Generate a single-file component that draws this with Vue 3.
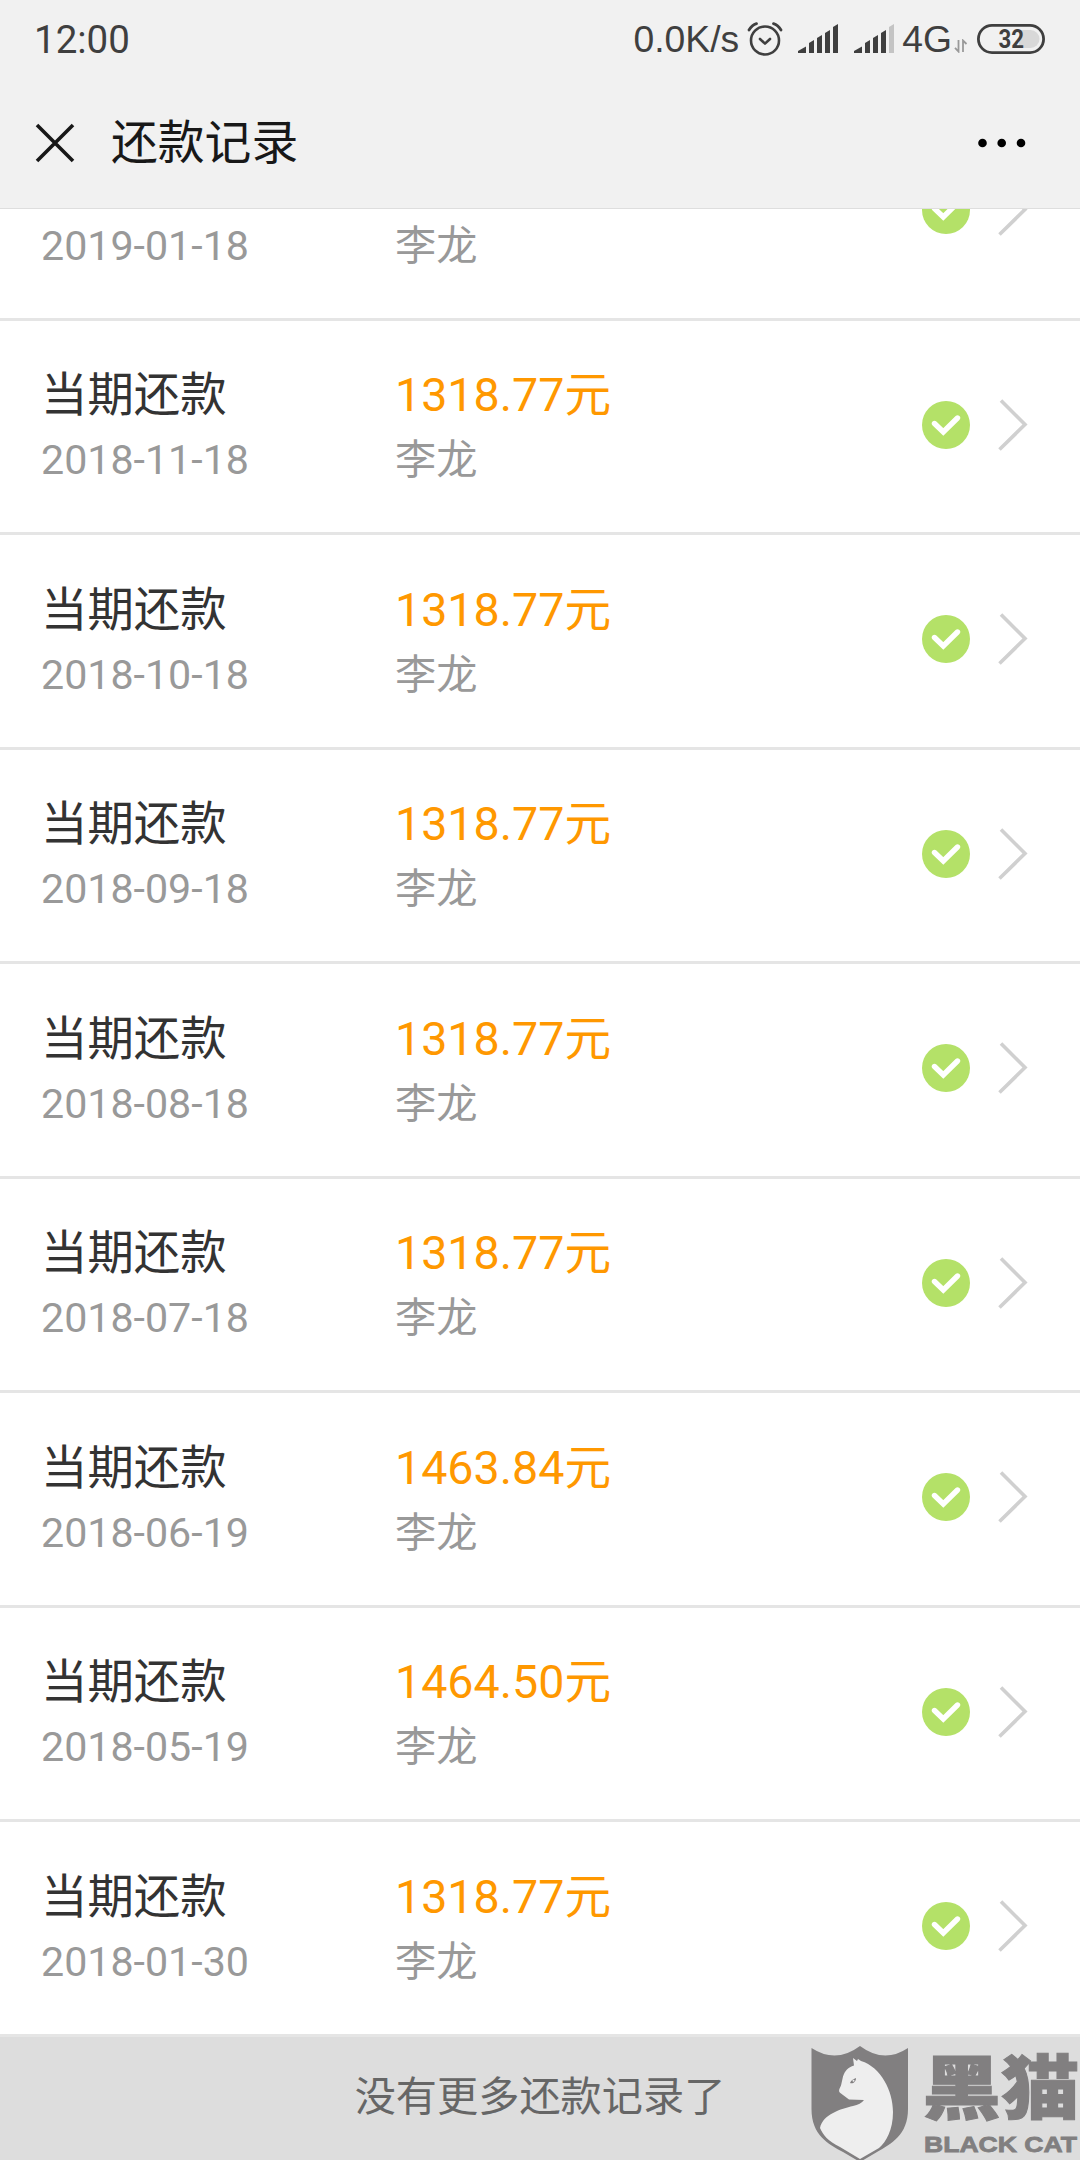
<template>
  <div class="page">
    <header class="header">
      <div class="status-bar">
        <span class="time">12:00</span>
        <div class="status-icons">
          <span class="speed">0.0K/s</span>
          <svg class="alarm" width="36" height="36" viewBox="0 0 36 36">
            <g fill="none" stroke="#3f3f3f" stroke-linecap="round" stroke-linejoin="round">
              <circle cx="18" cy="19.5" r="14" stroke-width="2.6" />
              <path d="M13 18l5 4.6 5-4.6" stroke-width="2.6" />
              <path d="M2 9Q5 4 9.5 2.6M26.5 2.6Q31 4 34 9" stroke-width="2.8" />
            </g>
          </svg>
          <svg
            v-for="(signal, index) in signals"
            :key="index"
            class="signal"
            width="41"
            height="30"
            viewBox="0 0 41 30"
          >
            <path
              v-for="(bar, i) in signalBars"
              :key="i"
              :d="bar"
              :fill="i < signal ? '#3f3f3f' : '#c4c4c4'"
            />
          </svg>
          <span class="network">4G</span>
          <svg class="data" width="14" height="14" viewBox="0 0 14 14">
            <path
              d="M4.5 1v11.5L1 8.8M9 13V1.5L12.5 5"
              fill="none"
              stroke="#999"
              stroke-width="1.8"
            />
          </svg>
          <svg class="battery" width="68" height="30" viewBox="0 0 68 30">
            <path d="M42 6h11.5a9 9 0 0 1 0 18H42z" fill="#d8d8d8" />
            <rect x="1.4" y="1.4" width="65.2" height="27.2" rx="13.6" fill="none" stroke="#3f3f3f" stroke-width="2.8" />
            <text x="21.5" y="23.8" textLength="25.5" lengthAdjust="spacingAndGlyphs">32</text>
          </svg>
        </div>
      </div>
      <nav class="nav-bar">
        <svg class="close" width="40" height="40" viewBox="0 0 40 40">
          <path d="M2 2l36 36M38 2L2 38" stroke="#181818" stroke-width="3.6" />
        </svg>
        <h1 class="title">还款记录</h1>
        <svg class="more" width="48" height="10" viewBox="0 0 48 10">
          <circle cx="4.5" cy="5" r="4.3" />
          <circle cx="23.7" cy="5" r="4.3" />
          <circle cx="43" cy="5" r="4.3" />
        </svg>
      </nav>
    </header>

    <main class="content">
      <ul class="records">
        <li v-for="(record, index) in records" :key="record.date" class="record">
          <div class="info">
            <div class="name"><span v-if="index > 0">当期还款</span></div>
            <div class="sub">{{ record.date }}</div>
          </div>
          <div class="info">
            <div class="amount"><span v-if="index > 0">{{ record.amount }}元</span></div>
            <div class="sub">李龙</div>
          </div>
          <svg class="check" width="48" height="48" viewBox="0 0 48 48">
            <circle cx="24" cy="24" r="24" fill="#b4e168" />
            <path
              d="M12.5 22.5l8.8 8.5L35.5 17"
              fill="none"
              stroke="#fff"
              stroke-width="5.4"
              stroke-linecap="round"
            />
          </svg>
          <svg class="arrow" width="30" height="54" viewBox="0 0 30 54">
            <path d="M3 2.5L27 26.5 1.5 51.5" fill="none" stroke="#d0d0d0" stroke-width="3.6" />
          </svg>
        </li>
      </ul>
      <footer class="footer">没有更多还款记录了</footer>
    </main>

    <svg class="watermark" width="270" height="116" viewBox="0 0 270 116">
      <path
        d="M1.5 4Q26 20 50 2q24 18 48 2v61c0 26-17 35-31 43l-17 10-17-10C18 100 1.5 91 1.5 65z"
        fill="#817f80"
      />
      <path
        d="M43 14l4 3 1-2 3 2c20 6 32 30 32 51 0 18-7 30-14 36l-19 11-20-12c-12-6-17-12-20-19 3-14 21-19 33-22 5-1 9-3 11-6l-15-.5-8-6c-3-2-2-4 0-8l2-9c2-6 5-9 11-11z"
        fill="#eee"
      />
      <path d="M40 39c1-3 4-4 6-5 0 4-3 6-6 5z" fill="#817f80" />
      <circle cx="43.5" cy="36.8" r="1" fill="#eee" />
      <text class="brand" x="112.5" y="69.500" textLength="157" lengthAdjust="spacingAndGlyphs">黑猫</text>
      <text class="brand-en" x="114" y="108" textLength="153" lengthAdjust="spacingAndGlyphs">BLACK CAT</text>
    </svg>
  </div>
</template>

<script setup>
import { ref } from 'vue'

// Number of lit bars for each SIM
const signals = [5, 4]

const signalBars = [
  'M0 29v-2l8-4.5V29z',
  'M11 29V19l5-3v13z',
  'M19 29V14l5-3v18z',
  'M27 29V9l5-3v23z',
  'M35 29V3l5-3v29z'
]

// The first record is half scrolled away, only its second line is visible
const records = ref([
  { date: '2019-01-18', amount: '' },
  { date: '2018-11-18', amount: '1318.77' },
  { date: '2018-10-18', amount: '1318.77' },
  { date: '2018-09-18', amount: '1318.77' },
  { date: '2018-08-18', amount: '1318.77' },
  { date: '2018-07-18', amount: '1318.77' },
  { date: '2018-06-19', amount: '1463.84' },
  { date: '2018-05-19', amount: '1464.50' },
  { date: '2018-01-30', amount: '1318.77' }
])
</script>

<style>
body {
  margin: 0;
  background: #ddd;
}
</style>

<style scoped>
.page {
  position: relative;
  width: 1080px;
  height: 2160px;
  overflow: hidden;
  display: flex;
  flex-direction: column;
  background: #ddd;
  font-family: Roboto, "Noto Sans CJK SC", sans-serif;
}

.header {
  flex: none;
  box-sizing: border-box;
  height: 209px;
  background: #f1f1f1;
  border-bottom: 1px solid #dedede;
}

.status-bar {
  display: flex;
  align-items: center;
  justify-content: space-between;
  height: 78px;
  padding: 0 35px 0 34px;
  color: #3f3f3f;
}

.time {
  padding-top: 2px;
  font-size: 38.5px;
  line-height: 78px;
}

.status-icons {
  display: flex;
  align-items: center;
  font-family: "Liberation Sans", sans-serif;
  font-size: 37.3px;
}

.speed,
.network {
  padding-top: 1px;
}

.alarm {
  margin-left: 8px;
}

.signal {
  margin-left: 15px;
}

.network {
  margin-left: 7px;
}

.data {
  margin: 13px 9px 0 2px;
}

.battery text {
  fill: #3f3f3f;
  font: bold 25px Roboto, sans-serif;
}

.nav-bar {
  display: flex;
  align-items: center;
  height: 130px;
  padding: 0 54px 0 35px;
}

.close {
  margin-top: -1px;
}

.title {
  flex: 1;
  margin: 0 0 0 36px;
  color: #181818;
  font-size: 46.8px;
  font-weight: 400;
  line-height: 70px;
}

.content {
  flex: 1;
  overflow: hidden;
}

.records {
  margin: -103px 0 0;
  padding: 0;
  list-style: none;
}

.record {
  box-sizing: border-box;
  display: grid;
  grid-template-columns: 354px 1fr 48px 58px;
  align-items: center;
  height: 214.5px;
  padding: 0 52px 2px 41px;
  background: #fff;
  border-bottom: 3px solid #e5e5e5;
}

.name,
.amount {
  height: 70px;
  color: #333;
  font-size: 46.4px;
  line-height: 70px;
}

.amount {
  color: #ff9800;
  font-size: 46.6px;
}

.sub {
  height: 60px;
  color: #999;
  font-size: 41.2px;
  line-height: 60px;
}

.arrow {
  margin-left: 28px;
}

.check,
.arrow {
  margin-top: -1px;
}

.footer {
  height: 120px;
  color: #666;
  font-size: 41.2px;
  line-height: 120px;
  text-align: center;
}

.watermark {
  position: absolute;
  right: 0;
  bottom: 0;
  overflow: visible;
}

.brand {
  fill: #817f80;
  stroke: #817f80;
  stroke-width: 1px;
  font: 900 70px "Noto Sans CJK SC", sans-serif;
}

.brand-en {
  fill: #817f80;
  stroke: #817f80;
  stroke-width: 0.8px;
  font: bold 22.5px "Liberation Sans", sans-serif;
}
</style>
